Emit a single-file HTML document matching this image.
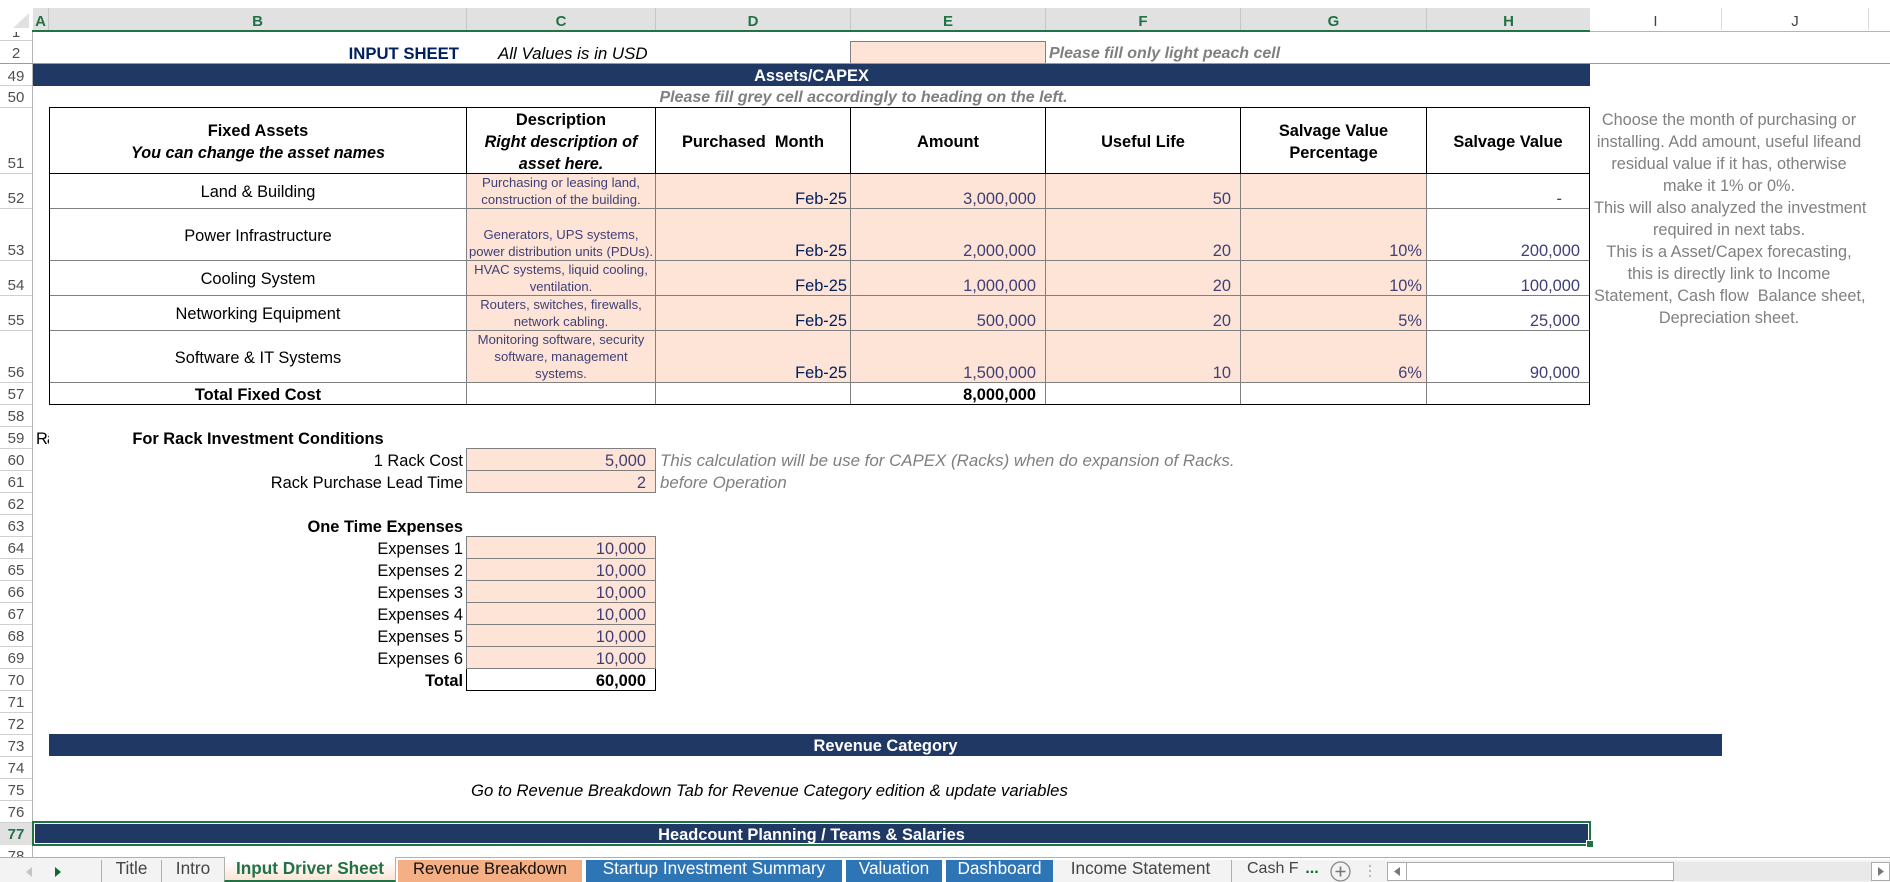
<!DOCTYPE html>
<html><head><meta charset="utf-8"><title>Input Driver Sheet</title>
<style>
html,body{margin:0;padding:0;width:1890px;height:882px;overflow:hidden;background:#fff}
body{position:relative;font-family:"Liberation Sans",Arial,sans-serif;font-size:16px;color:#000}
div{position:absolute;box-sizing:border-box}
.t{white-space:nowrap;line-height:22px;height:22px;font-size:16.4px;margin-top:1px}
.t.i{font-size:16.9px}.t.b.i{font-size:16.2px}.t.b.i.g{font-size:16px}.t.b.n{font-size:16.7px}
.c{text-align:center}.r{text-align:right;left:0}
.b{font-weight:bold}.i{font-style:italic}
.g{color:#7f7f7f}.v{color:#3f3f76}.n{color:#002060}
.d{font-size:13.1px;color:#3f3f76;line-height:17px;height:17px;white-space:nowrap;text-align:center;left:467px;width:188px;margin-top:1px}
.w{color:#fff;font-weight:bold}
.rn{left:0;width:32px;text-align:center;font-size:15px;color:#4f4f4f;line-height:22px;height:22px;margin-top:1px}
.rl{left:0;width:32px;height:1px;background:#d0d0d0}
.ch{top:8px;height:22px;background:#e1e1e1;text-align:center;color:#217346;font-weight:bold;font-size:15px;line-height:27px;border-right:1px solid #c6c6c6}
.gl{background:#808080}.bl{background:#000}
.note{left:1594px;width:270px;text-align:center;color:#808080;font-size:16.3px;white-space:nowrap;line-height:22px;height:22px;margin-top:1px}
.tab{top:860px;height:22px;line-height:17px;font-size:17.2px;text-align:center;white-space:nowrap;color:#444}
.bt{background:#2e75b6;color:#fff}
</style></head><body>

<!-- header row -->
<div style="left:0;top:8px;width:1890px;height:24px;background:#fff"></div>
<div style="left:0;top:8px;width:32px;height:24px;background:#fff"></div>
<svg style="position:absolute;left:13px;top:13px" width="16" height="15"><polygon points="16,0 16,15 0,15" fill="#e1e1e1"/></svg>
<div class="ch" style="left:33px;width:16px">A</div>
<div class="ch" style="left:49px;width:418px">B</div>
<div class="ch" style="left:467px;width:189px">C</div>
<div class="ch" style="left:656px;width:195px">D</div>
<div class="ch" style="left:851px;width:195px">E</div>
<div class="ch" style="left:1046px;width:195px">F</div>
<div class="ch" style="left:1241px;width:186px">G</div>
<div class="ch" style="left:1427px;width:163px;border-right:0">H</div>
<div style="left:1590px;top:8px;width:132px;height:22px;text-align:center;font-size:15px;line-height:27px;color:#444;border-right:1px solid #dcdcdc">I</div>
<div style="left:1722px;top:8px;width:147px;height:22px;text-align:center;font-size:15px;line-height:27px;color:#444;border-right:1px solid #dcdcdc">J</div>
<div style="left:1590px;top:31px;width:300px;height:1px;background:#b5b5b5"></div>
<div style="left:32px;top:30px;width:1558px;height:2px;background:#217346"></div>

<!-- row headers -->
<div style="left:0;top:32px;width:32px;height:826px;overflow:hidden">
<div class="rn" style="top:-11px">1</div><div class="rl" style="top:8px"></div>
<div class="rn" style="top:10px">2</div>
<div class="rn" style="top:33px">49</div><div class="rl" style="top:53px"></div>
<div class="rn" style="top:54px">50</div><div class="rl" style="top:75px"></div>
<div class="rn" style="top:120px">51</div><div class="rl" style="top:141px"></div>
<div class="rn" style="top:155px">52</div><div class="rl" style="top:176px"></div>
<div class="rn" style="top:207px">53</div><div class="rl" style="top:228px"></div>
<div class="rn" style="top:242px">54</div><div class="rl" style="top:263px"></div>
<div class="rn" style="top:277px">55</div><div class="rl" style="top:298px"></div>
<div class="rn" style="top:329px">56</div><div class="rl" style="top:350px"></div>
<div class="rn" style="top:351px">57</div><div class="rl" style="top:372px"></div>
<div class="rn" style="top:373px">58</div><div class="rl" style="top:394px"></div>
<div class="rn" style="top:395px">59</div><div class="rl" style="top:416px"></div>
<div class="rn" style="top:417px">60</div><div class="rl" style="top:438px"></div>
<div class="rn" style="top:439px">61</div><div class="rl" style="top:460px"></div>
<div class="rn" style="top:461px">62</div><div class="rl" style="top:482px"></div>
<div class="rn" style="top:483px">63</div><div class="rl" style="top:504px"></div>
<div class="rn" style="top:505px">64</div><div class="rl" style="top:526px"></div>
<div class="rn" style="top:527px">65</div><div class="rl" style="top:548px"></div>
<div class="rn" style="top:549px">66</div><div class="rl" style="top:570px"></div>
<div class="rn" style="top:571px">67</div><div class="rl" style="top:592px"></div>
<div class="rn" style="top:593px">68</div><div class="rl" style="top:614px"></div>
<div class="rn" style="top:615px">69</div><div class="rl" style="top:636px"></div>
<div class="rn" style="top:637px">70</div><div class="rl" style="top:658px"></div>
<div class="rn" style="top:659px">71</div><div class="rl" style="top:680px"></div>
<div class="rn" style="top:681px">72</div><div class="rl" style="top:702px"></div>
<div class="rn" style="top:703px">73</div><div class="rl" style="top:724px"></div>
<div class="rn" style="top:725px">74</div><div class="rl" style="top:746px"></div>
<div class="rn" style="top:747px">75</div><div class="rl" style="top:768px"></div>
<div class="rn" style="top:769px">76</div><div class="rl" style="top:790px"></div>
<div style="left:0;top:791px;width:32px;height:22px;background:#e1e1e1"></div>
<div class="rn b" style="top:791px;color:#217346">77</div>
<div class="rn" style="top:813px">78</div>
</div>
<div style="left:32px;top:32px;width:1px;height:826px;background:#b5b5b5"></div>

<!-- row 2 -->
<div style="left:0;top:63px;width:1890px;height:1px;background:#9a9a9a"></div>
<div class="t r b n" style="width:459px;top:42px">INPUT SHEET</div>
<div class="t i" style="left:498px;top:42px">All Values is in USD</div>
<div style="left:850px;top:41px;width:196px;height:22px;background:#fde4d6;border:1px solid #808080;border-bottom:0"></div>
<div class="t b i g" style="left:1049px;top:42px">Please fill only light peach cell</div>

<!-- row 49/50 -->
<div style="left:33px;top:64px;width:1557px;height:22px;background:#203864"></div>
<div class="t c w" style="left:33px;width:1557px;top:64px">Assets/CAPEX</div>
<div class="t c b i g" style="left:33px;width:1661px;top:86px">Please fill grey cell accordingly to heading on the left.</div>

<!-- table -->
<div style="left:467px;top:174px;width:959px;height:208px;background:#fde4d6"></div>
<div class="gl" style="left:49px;top:208px;width:1541px;height:1px"></div>
<div class="gl" style="left:49px;top:260px;width:1541px;height:1px"></div>
<div class="gl" style="left:49px;top:295px;width:1541px;height:1px"></div>
<div class="gl" style="left:49px;top:330px;width:1541px;height:1px"></div>
<div class="gl" style="left:49px;top:382px;width:1541px;height:1px"></div>
<div class="gl" style="left:466px;top:174px;width:1px;height:230px"></div>
<div class="gl" style="left:655px;top:174px;width:1px;height:230px"></div>
<div class="gl" style="left:850px;top:174px;width:1px;height:230px"></div>
<div class="gl" style="left:1045px;top:174px;width:1px;height:230px"></div>
<div class="gl" style="left:1240px;top:174px;width:1px;height:230px"></div>
<div class="gl" style="left:1426px;top:174px;width:1px;height:230px"></div>
<div class="bl" style="left:466px;top:107px;width:1px;height:67px"></div>
<div class="bl" style="left:655px;top:107px;width:1px;height:67px"></div>
<div class="bl" style="left:850px;top:107px;width:1px;height:67px"></div>
<div class="bl" style="left:1045px;top:107px;width:1px;height:67px"></div>
<div class="bl" style="left:1240px;top:107px;width:1px;height:67px"></div>
<div class="bl" style="left:1426px;top:107px;width:1px;height:67px"></div>
<div class="bl" style="left:49px;top:107px;width:1541px;height:1px"></div>
<div class="bl" style="left:49px;top:173px;width:1541px;height:1px"></div>
<div class="bl" style="left:49px;top:404px;width:1541px;height:1px"></div>
<div class="bl" style="left:49px;top:107px;width:1px;height:298px"></div>
<div class="bl" style="left:1589px;top:107px;width:1px;height:298px"></div>

<div class="t c b" style="left:50px;width:416px;top:119px">Fixed Assets</div>
<div class="t c b i" style="left:50px;width:416px;top:141px">You can change the asset names</div>
<div class="t c b" style="left:467px;width:188px;top:108px">Description</div>
<div class="t c b i" style="left:467px;width:188px;top:130px">Right description of</div>
<div class="t c b i" style="left:467px;width:188px;top:152px">asset here.</div>
<div class="t c b" style="left:656px;width:194px;top:130px;white-space:pre">Purchased  Month</div>
<div class="t c b" style="left:851px;width:194px;top:130px">Amount</div>
<div class="t c b" style="left:1046px;width:194px;top:130px">Useful Life</div>
<div class="t c b" style="left:1241px;width:185px;top:119px">Salvage Value</div>
<div class="t c b" style="left:1241px;width:185px;top:141px">Percentage</div>
<div class="t c b" style="left:1427px;width:162px;top:130px">Salvage Value</div>

<div class="t c" style="left:50px;width:416px;top:180px">Land &amp; Building</div>
<div class="t c" style="left:50px;width:416px;top:224px">Power Infrastructure</div>
<div class="t c" style="left:50px;width:416px;top:267px">Cooling System</div>
<div class="t c" style="left:50px;width:416px;top:302px">Networking Equipment</div>
<div class="t c" style="left:50px;width:416px;top:346px">Software &amp; IT Systems</div>
<div class="t c b" style="left:50px;width:416px;top:383px">Total Fixed Cost</div>

<div class="d" style="top:173px">Purchasing or leasing land,</div>
<div class="d" style="top:190px">construction of the building.</div>
<div class="d" style="top:225px">Generators, UPS systems,</div>
<div class="d" style="top:242px">power distribution units (PDUs).</div>
<div class="d" style="top:260px">HVAC systems, liquid cooling,</div>
<div class="d" style="top:277px">ventilation.</div>
<div class="d" style="top:295px">Routers, switches, firewalls,</div>
<div class="d" style="top:312px">network cabling.</div>
<div class="d" style="top:330px">Monitoring software, security</div>
<div class="d" style="top:347px">software, management</div>
<div class="d" style="top:364px">systems.</div>

<div class="t r n" style="width:847px;top:187px">Feb-25</div>
<div class="t r n" style="width:847px;top:239px">Feb-25</div>
<div class="t r n" style="width:847px;top:274px">Feb-25</div>
<div class="t r n" style="width:847px;top:309px">Feb-25</div>
<div class="t r n" style="width:847px;top:361px">Feb-25</div>

<div class="t r v" style="width:1036px;top:187px">3,000,000</div>
<div class="t r v" style="width:1036px;top:239px">2,000,000</div>
<div class="t r v" style="width:1036px;top:274px">1,000,000</div>
<div class="t r v" style="width:1036px;top:309px">500,000</div>
<div class="t r v" style="width:1036px;top:361px">1,500,000</div>
<div class="t r b" style="width:1036px;top:383px">8,000,000</div>

<div class="t r v" style="width:1231px;top:187px">50</div>
<div class="t r v" style="width:1231px;top:239px">20</div>
<div class="t r v" style="width:1231px;top:274px">20</div>
<div class="t r v" style="width:1231px;top:309px">20</div>
<div class="t r v" style="width:1231px;top:361px">10</div>

<div class="t r v" style="width:1422px;top:239px">10%</div>
<div class="t r v" style="width:1422px;top:274px">10%</div>
<div class="t r v" style="width:1422px;top:309px">5%</div>
<div class="t r v" style="width:1422px;top:361px">6%</div>

<div class="t r v" style="width:1562px;top:187px">-</div>
<div class="t r v" style="width:1580px;top:239px">200,000</div>
<div class="t r v" style="width:1580px;top:274px">100,000</div>
<div class="t r v" style="width:1580px;top:309px">25,000</div>
<div class="t r v" style="width:1580px;top:361px">90,000</div>

<!-- right note -->
<div class="note" style="top:108px">Choose the month of purchasing or</div>
<div class="note" style="top:130px">installing. Add amount, useful lifeand</div>
<div class="note" style="top:152px">residual value if it has, otherwise</div>
<div class="note" style="top:174px">make it 1% or 0%.</div>
<div class="note" style="top:196px">This will also analyzed the investment</div>
<div class="note" style="top:218px">required in next tabs.</div>
<div class="note" style="top:240px">This is a Asset/Capex forecasting,</div>
<div class="note" style="top:262px">this is directly link to Income</div>
<div class="note" style="top:284px;white-space:pre">Statement, Cash flow  Balance sheet,</div>
<div class="note" style="top:306px">Depreciation sheet.</div>

<!-- rack -->
<div style="left:33px;top:427px;width:16px;height:23px;overflow:hidden"><div class="t" style="left:3px;top:0;letter-spacing:-1px">Ra</div></div>
<div class="t c b" style="left:50px;width:416px;top:427px">For Rack Investment Conditions</div>
<div class="t r" style="width:463px;top:449px">1 Rack Cost</div>
<div class="t r" style="width:463px;top:471px">Rack Purchase Lead Time</div>
<div style="left:466px;top:448px;width:190px;height:45px;background:#fde4d6;border:1px solid #808080"></div>
<div class="gl" style="left:466px;top:470px;width:190px;height:1px"></div>
<div class="t r v" style="width:646px;top:449px">5,000</div>
<div class="t r v" style="width:646px;top:471px">2</div>
<div class="t i g" style="left:660px;top:449px">This calculation will be use for CAPEX (Racks) when do expansion of Racks.</div>
<div class="t i g" style="left:660px;top:471px">before Operation</div>

<!-- one time -->
<div class="t r b" style="width:463px;top:515px">One Time Expenses</div>
<div style="left:466px;top:536px;width:190px;height:133px;background:#fde4d6;border:1px solid #808080"></div>
<div class="gl" style="left:466px;top:558px;width:190px;height:1px"></div>
<div class="gl" style="left:466px;top:580px;width:190px;height:1px"></div>
<div class="gl" style="left:466px;top:602px;width:190px;height:1px"></div>
<div class="gl" style="left:466px;top:624px;width:190px;height:1px"></div>
<div class="gl" style="left:466px;top:646px;width:190px;height:1px"></div>
<div class="t r" style="width:463px;top:537px">Expenses 1</div>
<div class="t r" style="width:463px;top:559px">Expenses 2</div>
<div class="t r" style="width:463px;top:581px">Expenses 3</div>
<div class="t r" style="width:463px;top:603px">Expenses 4</div>
<div class="t r" style="width:463px;top:625px">Expenses 5</div>
<div class="t r" style="width:463px;top:647px">Expenses 6</div>
<div class="t r v" style="width:646px;top:537px">10,000</div>
<div class="t r v" style="width:646px;top:559px">10,000</div>
<div class="t r v" style="width:646px;top:581px">10,000</div>
<div class="t r v" style="width:646px;top:603px">10,000</div>
<div class="t r v" style="width:646px;top:625px">10,000</div>
<div class="t r v" style="width:646px;top:647px">10,000</div>
<div class="t r b" style="width:463px;top:669px">Total</div>
<div class="t r b" style="width:646px;top:669px">60,000</div>
<div class="bl" style="left:466px;top:669px;width:1px;height:22px"></div>
<div class="bl" style="left:655px;top:669px;width:1px;height:22px"></div>
<div class="bl" style="left:466px;top:690px;width:190px;height:1px"></div>

<!-- revenue -->
<div style="left:49px;top:734px;width:1673px;height:22px;background:#203864"></div>
<div class="t c w" style="left:49px;width:1673px;top:734px">Revenue Category</div>
<div class="t i" style="left:471px;top:779px;font-size:16.7px">Go to Revenue Breakdown Tab for Revenue Category edition &amp; update variables</div>

<!-- selected row -->
<div style="left:32px;top:821px;width:1559px;height:25px;background:#203864;border:2px solid #217346;box-shadow:inset 0 0 0 1px #fff"></div>
<div class="t c w" style="left:33px;width:1557px;top:823px">Headcount Planning / Teams &amp; Salaries</div>
<div style="left:1587px;top:841px;width:6px;height:6px;background:#217346;outline:1px solid #fff"></div>

<!-- tab bar -->
<div style="left:0;top:858px;width:1890px;height:24px;background:#f3f3f3"></div>
<div style="left:0;top:857px;width:1890px;height:1px;background:#b0b0b0"></div>
<svg style="position:absolute;left:24px;top:866px" width="40" height="12"><polygon points="8,1 8,11 2,6" fill="#c4c4c4"/><polygon points="31,1 31,11 37,6" fill="#0f6a2e"/></svg>
<div style="left:101px;top:860px;width:1px;height:22px;background:#b0b0b0"></div>
<div style="left:161px;top:860px;width:1px;height:22px;background:#b0b0b0"></div>
<div class="tab" style="left:102px;width:59px">Title</div>
<div class="tab" style="left:162px;width:62px">Intro</div>
<div style="left:224px;top:857px;width:172px;height:25px;background:linear-gradient(#fff,#fff 20%,#fce4d6);border-left:1px solid #b0b0b0;border-right:1px solid #b0b0b0;border-bottom:2px solid #217346"></div>
<div class="tab b" style="left:225px;width:170px;color:#217346">Input Driver Sheet</div>
<div style="left:396px;top:858px;width:1493px;height:3px;background:#fff"></div>
<div style="left:396px;top:858px;width:2px;height:24px;background:#fff"></div>
<div class="tab" style="left:398px;width:184px;background:#f4b084;color:#111;font-size:16.6px">Revenue Breakdown</div>
<div style="left:582px;top:860px;width:4px;height:22px;background:#fff"></div>
<div class="tab bt" style="left:586px;width:256px">Startup Investment Summary</div>
<div style="left:842px;top:860px;width:4px;height:22px;background:#fff"></div>
<div class="tab bt" style="left:846px;width:96px">Valuation</div>
<div style="left:942px;top:860px;width:4px;height:22px;background:#fff"></div>
<div class="tab bt" style="left:946px;width:107px">Dashboard</div>
<div style="left:1053px;top:860px;width:837px;height:22px;background:#f3f3f3"></div>
<div style="left:1053px;top:857px;width:837px;height:1px;background:#b0b0b0"></div>
<div class="tab" style="left:1052px;width:177px">Income Statement</div>
<div style="left:1231px;top:860px;width:1px;height:22px;background:#b0b0b0"></div>
<div class="tab" style="left:1247px;width:50px;text-align:left;font-size:16px">Cash F</div>
<div class="tab" style="left:1304px;width:16px;color:#0f6a2e;font-weight:bold;line-height:18px;font-size:16px">...</div>
<svg style="position:absolute;left:1330px;top:861px" width="21" height="21"><circle cx="10.5" cy="10.5" r="9.5" fill="none" stroke="#888" stroke-width="1.3"/><path d="M10.5 5.5v10M5.5 10.5h10" stroke="#777" stroke-width="1.6"/></svg>
<svg style="position:absolute;left:1368px;top:864px" width="4" height="15"><circle cx="2" cy="2" r="1.2" fill="#bbb"/><circle cx="2" cy="7" r="1.2" fill="#bbb"/><circle cx="2" cy="12" r="1.2" fill="#bbb"/></svg>
<div style="left:1387px;top:862px;width:503px;height:19px;background:#e9e9e9"></div>
<div style="left:1387px;top:862px;width:20px;height:19px;background:#fff;border:1px solid #ababab"></div>
<div style="left:1406px;top:862px;width:268px;height:19px;background:#fff;border:1px solid #ababab"></div>
<div style="left:1871px;top:862px;width:19px;height:19px;background:#fff;border:1px solid #ababab"></div>
<svg style="position:absolute;left:1392px;top:866px" width="10" height="11"><polygon points="8,1 8,10 2,5.5" fill="#777"/></svg>
<svg style="position:absolute;left:1876px;top:866px" width="10" height="11"><polygon points="2,1 2,10 8,5.5" fill="#777"/></svg>
</body></html>
